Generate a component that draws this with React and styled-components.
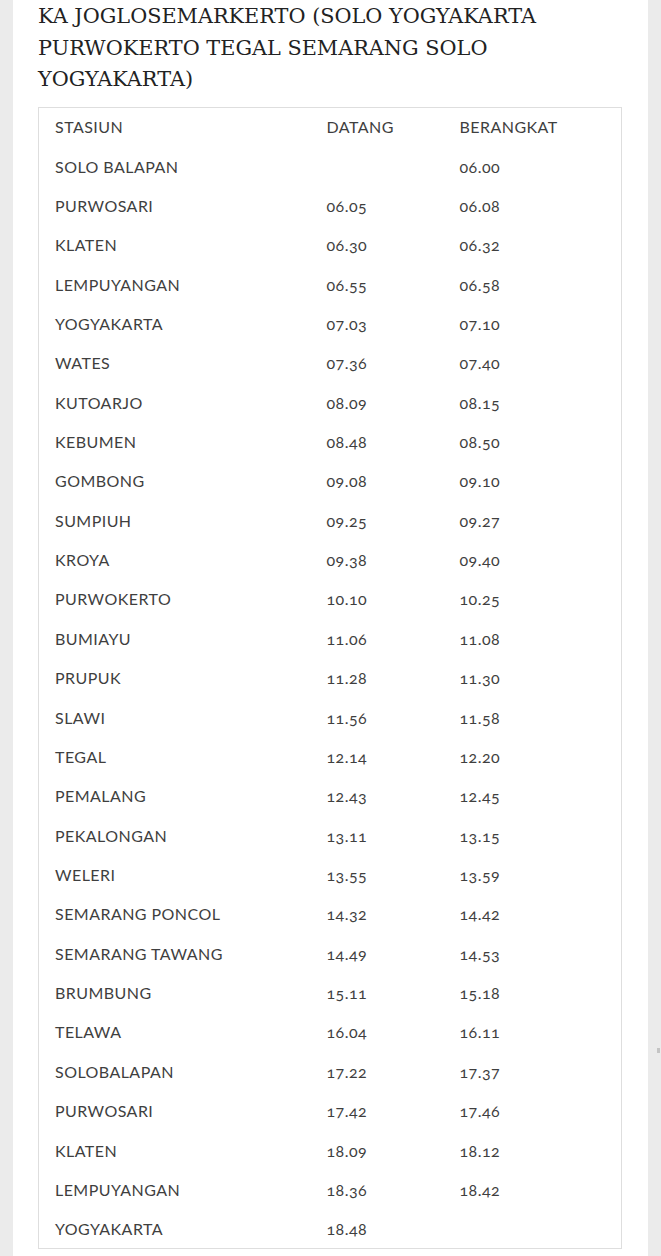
import React from 'react';
import styled, { createGlobalStyle } from 'styled-components';

const GlobalStyle = createGlobalStyle`
  html, body {
    margin: 0;
    padding: 0;
    background: #ebebeb;
  }
`;

const Page = styled.div`
  margin: 0 13px;
  min-height: 1256px;
  background: #ffffff;
  padding: 1px 26px 0 25px;
  box-sizing: border-box;
`;

const Title = styled.h1`
  margin: 0 0 11px;
  font-family: 'DejaVu Serif', 'Liberation Serif', serif;
  font-size: 20.8px;
  font-weight: normal;
  line-height: 31.5px;
  color: #222;
`;

const Table = styled.table`
  width: 100%;
  table-layout: fixed;
  border-collapse: collapse;
  border: 1px solid #dedede;
  font-family: 'Lato', 'Open Sans', sans-serif;
  font-size: 16px;
  font-variant-numeric: oldstyle-nums;
  color: #3f3f3f;
`;

const Col = styled.col`
  width: ${p => (p.$w ? `${p.$w}px` : 'auto')};
`;

const Row = styled.tr`
  height: 39.37px;
`;

const Cell = styled.td`
  padding: 0 0 0 16px;
  vertical-align: middle;
  letter-spacing: 0.45px;
  white-space: nowrap;
`;

const ScrollThumb = styled.div`
  position: fixed;
  right: 1px;
  top: 1048px;
  width: 3px;
  height: 5px;
  background: #c4c4c4;
`;

const schedule = [
  ['SOLO BALAPAN', '', '06.00'],
  ['PURWOSARI', '06.05', '06.08'],
  ['KLATEN', '06.30', '06.32'],
  ['LEMPUYANGAN', '06.55', '06.58'],
  ['YOGYAKARTA', '07.03', '07.10'],
  ['WATES', '07.36', '07.40'],
  ['KUTOARJO', '08.09', '08.15'],
  ['KEBUMEN', '08.48', '08.50'],
  ['GOMBONG', '09.08', '09.10'],
  ['SUMPIUH', '09.25', '09.27'],
  ['KROYA', '09.38', '09.40'],
  ['PURWOKERTO', '10.10', '10.25'],
  ['BUMIAYU', '11.06', '11.08'],
  ['PRUPUK', '11.28', '11.30'],
  ['SLAWI', '11.56', '11.58'],
  ['TEGAL', '12.14', '12.20'],
  ['PEMALANG', '12.43', '12.45'],
  ['PEKALONGAN', '13.11', '13.15'],
  ['WELERI', '13.55', '13.59'],
  ['SEMARANG PONCOL', '14.32', '14.42'],
  ['SEMARANG TAWANG', '14.49', '14.53'],
  ['BRUMBUNG', '15.11', '15.18'],
  ['TELAWA', '16.04', '16.11'],
  ['SOLOBALAPAN', '17.22', '17.37'],
  ['PURWOSARI', '17.42', '17.46'],
  ['KLATEN', '18.09', '18.12'],
  ['LEMPUYANGAN', '18.36', '18.42'],
  ['YOGYAKARTA', '18.48', ''],
];

function App() {
  return (
    <>
      <GlobalStyle />
      <Page>
        <Title>KA JOGLOSEMARKERTO (SOLO YOGYAKARTA PURWOKERTO TEGAL SEMARANG SOLO YOGYAKARTA)</Title>
        <Table>
          <colgroup>
            <Col $w={272} />
            <Col $w={133} />
            <Col />
          </colgroup>
          <tbody>
            <Row>
              <Cell>STASIUN</Cell>
              <Cell>DATANG</Cell>
              <Cell>BERANGKAT</Cell>
            </Row>
            {schedule.map(([station, arrive, depart], i) => (
              <Row key={i}>
                <Cell>{station}</Cell>
                <Cell>{arrive}</Cell>
                <Cell>{depart}</Cell>
              </Row>
            ))}
          </tbody>
        </Table>
      </Page>
      <ScrollThumb />
    </>
  );
}

export default App;
